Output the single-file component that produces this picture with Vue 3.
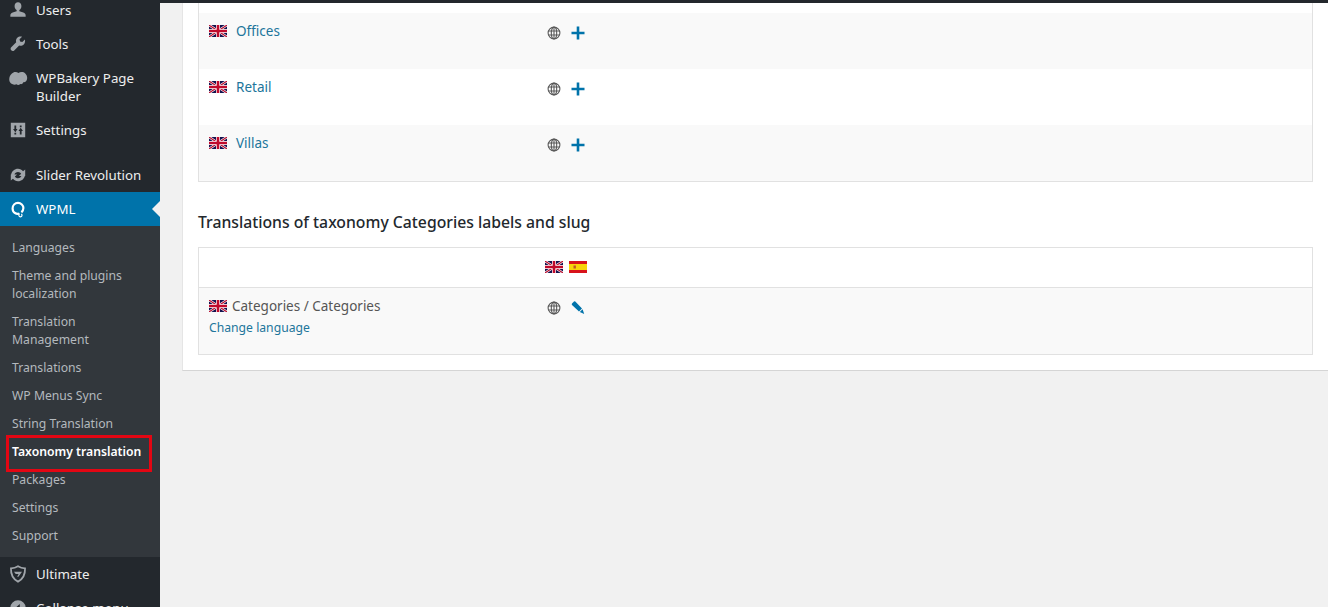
<script setup>
const terms = ["Offices", "Retail", "Villas"];

const subItems = [
  { label: "Languages" },
  { label: "Theme and plugins localization" },
  { label: "Translation Management" },
  { label: "Translations" },
  { label: "WP Menus Sync" },
  { label: "String Translation" },
  { label: "Taxonomy translation", current: true },
  { label: "Packages" },
  { label: "Settings" },
  { label: "Support" },
];
</script>

<template>
  <div class="page">
    <!-- shared icons -->
    <svg class="defs" width="0" height="0">
      <symbol id="flag-uk" viewBox="0 0 18 12">
        <rect width="18" height="12" fill="#14124e" />
        <path d="M0 0L18 12M18 0L0 12" stroke="#fff" stroke-width="2.4" />
        <path d="M0 0L18 12M18 0L0 12" stroke="#b8082a" stroke-width="1.1" />
        <path d="M9 0V12M0 6H18" stroke="#fff" stroke-width="4" />
        <path d="M9 0V12M0 6H18" stroke="#c00a2c" stroke-width="2.6" />
      </symbol>
      <symbol id="flag-es" viewBox="0 0 18 12">
        <rect width="18" height="12" fill="#d8131b" />
        <rect y="3" width="18" height="6" fill="#f8d40a" />
        <rect x="4.5" y="4.5" width="2.4" height="3" fill="#c0562a" />
      </symbol>
      <symbol id="globe" viewBox="0 0 14 14">
        <g fill="none" stroke="#5a5a5a" stroke-width="1.1">
          <circle cx="7" cy="7" r="5.9" />
          <ellipse cx="7" cy="7" rx="2.7" ry="5.9" />
          <path d="M7 1V13M1.4 5H12.6M1.4 9H12.6" />
        </g>
      </symbol>
      <symbol id="plus" viewBox="0 0 14 14">
        <path d="M7 .5V13.500M.5 7H13.500" stroke="#0073aa" stroke-width="2.600" />
      </symbol>
      <symbol id="pencil" viewBox="0 0 14 14">
        <path d="M1 2.600L3 .6a1 1 0 0 1 1.300 0L11 7.400 8 10.400 1 3.900a1 1 0 0 1 0-1.300z" fill="#0073aa" />
        <path d="M8.800 11L11.600 8.200 13.200 13z" fill="#0073aa" />
      </symbol>
    </svg>

    <aside class="sidebar">
      <ul class="menu">
        <li class="item">
          <svg class="ico" viewBox="0 0 20 20"><path d="M10 1.500c2.200 0 3.800 1.700 3.800 4 0 2.200-1.100 4-2.300 4.600v1.200l3.600 1.300c2.300.8 3.400 1.700 3.400 3.400v1.500H1.500V16c0-1.700 1.100-2.600 3.400-3.400l3.600-1.300v-1.200C7.300 9.500 6.200 7.700 6.200 5.500c0-2.300 1.600-4 3.800-4z" /></svg>
          <span>Users</span>
        </li>
        <li class="item">
          <svg class="ico" viewBox="0 0 20 20"><path d="M17.700 5.100l-2.900 2.800-2.500-.6-.6-2.500 2.800-2.900c-1.900-.6-4-.2-5.300 1.100-1.400 1.400-1.800 3.300-1.200 5L2.500 13.500C1.700 14.300 1.500 15.600 2.300 16.800c.9 1.200 2.500 1.300 3.500.4l5.500-5.400c1.700.6 3.700.2 5.100-1.200 1.300-1.300 1.800-3.600 1.300-5.500z" /></svg>
          <span>Tools</span>
        </li>
        <li class="item">
          <svg class="ico wide" viewBox="0 0 22 16"><path d="M6 .8C8 -.2 10 .3 11.500 1.500 13.500 0 17 0 19 2c2.500 2.400 2.800 6.500.8 8.600-.8.900-2 1.300-3 1-.5 1.600-2 2.600-3.400 2-1 1.400-3 1.500-4 .3-2.500.8-5.400.1-7-2C.6 9.200.9 3.300 6 .8z" /></svg>
          <span>WPBakery Page Builder</span>
        </li>
        <li class="item">
          <svg class="ico" viewBox="0 0 20 20"><path fill-rule="evenodd" d="M2 2h16v16H2zM6 5v4H4.500L7 12.500 9.500 9H8V5zM6 13v2h2v-2zM14 15v-4h1.500L13 7.500 10.500 11H12v4zM12 5v2h2V5z" /></svg>
          <span>Settings</span>
        </li>
        <li class="item gap">
          <svg class="ico" viewBox="0 0 20 20"><path d="M10 3c2.300 0 4.300 1.100 5.600 2.800L18 4v7h-7l2.500-2.400C12.800 7.400 11.500 6.600 10 6.600c-1.900 0-3.500 1.200-4 3H2.300C3 5.900 6.200 3 10 3zM2 9.500h7l-2.500 2.100c.7 1.200 2 2 3.500 2 1.900 0 3.500-1.200 4-3h3.700C17 14.300 13.800 17 10 17c-2.300 0-4.300-1-5.600-2.700L2 16z" /></svg>
          <span>Slider Revolution</span>
        </li>
        <li class="item active">
          <svg class="ico" viewBox="0 0 20 20"><path fill="none" stroke="#fff" stroke-width="2.400" d="M11.500 15c-3 1-7.500-.5-7.500-5.500C4 5.900 6.700 3.200 10 3.200s6 2.700 6 5.800c0 2-.8 3.500-2.200 4.700" /><path fill="none" stroke="#fff" stroke-width="1.300" d="M11.500 15c-1.200 1.400-.6 3.700 1.200 3.700s2.300-2 1.100-3.400" /></svg>
          <span>WPML</span>
        </li>
      </ul>

      <ul class="submenu">
        <li v-for="sub in subItems" :key="sub.label" class="sub" :class="{ current: sub.current }">
          {{ sub.label }}
          <div v-if="sub.current" class="annotation"></div>
        </li>
      </ul>

      <ul class="menu">
        <li class="item ultimate">
          <svg class="ico" viewBox="0 0 20 20"><path fill="none" stroke="#a0a5aa" stroke-width="2" d="M10 1.500c2 1.300 5 2.200 7.800 2.200.3 6.800-2.200 12-7.800 14.800C4.400 15.700 1.900 10.500 2.200 3.700 5 3.700 8 2.800 10 1.500z" /><path d="M5.500 7.500h9l-4 5.500H9l1.700-3H7.500z" /></svg>
          <span>Ultimate</span>
        </li>
        <li class="item">
          <svg class="ico" viewBox="0 0 20 20"><path fill-rule="evenodd" d="M10 1.500a8.500 8.500 0 1 1 0 17 8.500 8.500 0 0 1 0-17zM12 5.500L7 10l5 4.500z" /></svg>
          <span>Collapse menu</span>
        </li>
      </ul>
    </aside>

    <main class="content">
      <div class="topbar"></div>
      <section class="panel">
        <div class="table cut">
          <div class="tail"></div>
          <div v-for="term in terms" :key="term" class="row term-row">
            <div class="name">
              <svg class="flag"><use href="#flag-uk" /></svg>
              <a class="link">{{ term }}</a>
            </div>
            <div class="actions">
              <svg class="icon"><use href="#globe" /></svg>
              <svg class="icon"><use href="#plus" /></svg>
            </div>
          </div>
        </div>

        <h3 class="title">Translations of taxonomy Categories labels and slug</h3>

        <div class="table">
          <div class="row head-row">
            <div></div>
            <div class="flags">
              <svg class="flag"><use href="#flag-uk" /></svg>
              <svg class="flag"><use href="#flag-es" /></svg>
            </div>
          </div>
          <div class="row label-row">
            <div>
              <div class="label">
                <svg class="flag"><use href="#flag-uk" /></svg>
                <span>Categories / Categories</span>
              </div>
              <a class="link small">Change language</a>
            </div>
            <div class="actions">
              <svg class="icon"><use href="#globe" /></svg>
              <svg class="icon"><use href="#pencil" /></svg>
            </div>
          </div>
        </div>
      </section>
    </main>
  </div>
</template>

<style>
html,
body {
  margin: 0;
  background: #f1f1f1;
  overflow: hidden;
}
</style>

<style scoped>
.page {
  display: flex;
  height: 607px;
  overflow: hidden;
  font-family: "Noto Sans", sans-serif;
  font-size: 13px;
  color: #444;
}
.defs {
  position: absolute;
}

/* sidebar */
.sidebar {
  flex: 0 0 160px;
  height: 607px;
  overflow: hidden;
  background: #23282d;
}
.menu,
.submenu {
  list-style: none;
  margin: 0;
}
.menu {
  padding: 0;
}
.sidebar > .menu:first-child {
  margin-top: -7px;
}
.item {
  display: flex;
  padding: 8px 10px 8px 9px;
  font-size: 13.3px;
  line-height: 18px;
  color: #eee;
  position: relative;
}
.item span {
  margin-left: 9px;
}
.ico {
  flex: 0 0 18px;
  width: 18px;
  height: 18px;
  fill: #a0a5aa;
}
.ico.wide {
  flex-basis: 20px;
  width: 20px;
  margin: 1px -1px 0 -1px;
}
.gap {
  margin-top: 11px;
}
.active {
  background: #0073aa;
  color: #fff;
}
.active::after {
  content: "";
  position: absolute;
  right: 0;
  top: 9px;
  border: 8px solid transparent;
  border-left: 0;
  border-right-color: #f1f1f1;
}
.submenu {
  background: #32373c;
  padding: 8px 0 7px;
}
.sub {
  position: relative;
  padding: 5px 12px;
  line-height: 18px;
  color: #b4b9be;
  font-size: 12.2px;
}
.current {
  color: #fff;
  font-weight: 600;
  white-space: nowrap;
}
.annotation {
  position: absolute;
  left: 6px;
  top: -3px;
  width: 146px;
  height: 37px;
  box-sizing: border-box;
  border: 3px solid #e30613;
}

/* content */
.content {
  flex: 1;
  min-width: 0;
  background: #f1f1f1;
}
.topbar {
  height: 3px;
  background: #23282d;
}
.panel {
  margin-left: 22px;
  padding: 0 15px 15px;
  background: #fff;
  border-left: 1px solid #e5e5e5;
  border-bottom: 1px solid #d5d5d5;
}
.table {
  border: 1px solid #e1e1e1;
}
.table.cut {
  border-top: 0;
}
.tail {
  height: 10px;
}
.row {
  display: grid;
  grid-template-columns: 338px 1fr;
  padding-left: 10px;
}
.term-row {
  height: 56px;
  box-sizing: border-box;
  padding-top: 9px;
}
.term-row:nth-child(even) {
  background: #f9f9f9;
}
.name,
.label {
  display: flex;
  align-items: center;
}
.name {
  height: 18px;
  line-height: 18px;
  font-size: 13.5px;
}
.flag {
  width: 18px;
  height: 12px;
  flex: none;
  display: block;
}
.link {
  color: #21759b;
  margin-left: 9px;
  font-weight: 400;
}
.link.small {
  display: block;
  margin: 4px 0 0;
  font-size: 12.2px;
  line-height: 18px;
}
.actions {
  display: flex;
  gap: 10px;
  padding-top: 4px;
}
.icon {
  width: 14px;
  height: 14px;
  display: block;
}
.title {
  margin: 30px 0 15px;
  font-size: 15.75px;
  font-weight: 500;
  line-height: 20px;
  color: #23282d;
}
.head-row {
  height: 40px;
  box-sizing: border-box;
  align-items: center;
  padding-bottom: 2px;
  border-bottom: 1px solid #e1e1e1;
}
.flags {
  display: flex;
  gap: 6px;
  margin-left: -2px;
}
.label-row {
  height: 66px;
  box-sizing: border-box;
  padding-top: 9px;
  background: #f9f9f9;
}
.label {
  height: 18px;
  gap: 5px;
  font-size: 13.5px;
  color: #555;
}
</style>
